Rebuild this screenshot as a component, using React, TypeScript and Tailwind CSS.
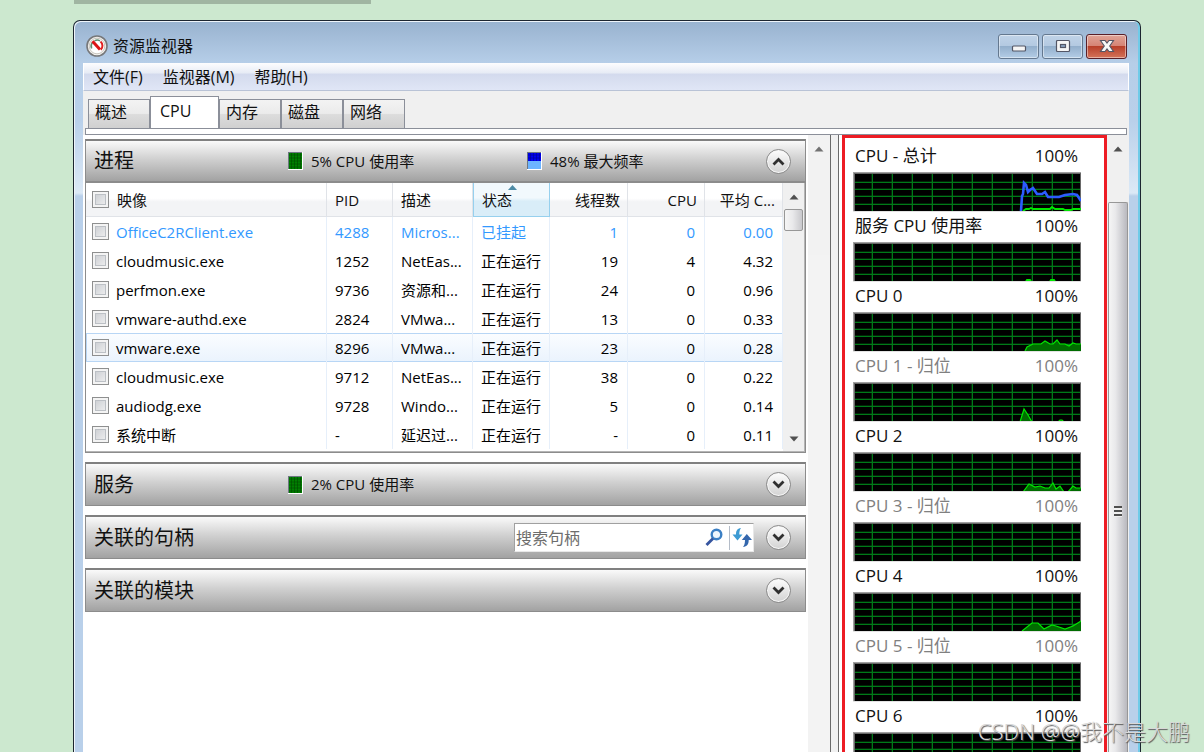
import { useState } from "react";
import type { ReactNode } from "react";

interface Process {
  id: number;
  name: string;
  pid: string;
  desc: string;
  status: string;
  threads: string;
  cpu: string;
  avg: string;
  suspended?: boolean;
  hover?: boolean;
}

const processes: Process[] = [
  { id: 1, name: "OfficeC2RClient.exe", pid: "4288", desc: "Micros...", status: "已挂起", threads: "1", cpu: "0", avg: "0.00", suspended: true },
  { id: 2, name: "cloudmusic.exe", pid: "1252", desc: "NetEas...", status: "正在运行", threads: "19", cpu: "4", avg: "4.32" },
  { id: 3, name: "perfmon.exe", pid: "9736", desc: "资源和...", status: "正在运行", threads: "24", cpu: "0", avg: "0.96" },
  { id: 4, name: "vmware-authd.exe", pid: "2824", desc: "VMwa...", status: "正在运行", threads: "13", cpu: "0", avg: "0.33" },
  { id: 5, name: "vmware.exe", pid: "8296", desc: "VMwa...", status: "正在运行", threads: "23", cpu: "0", avg: "0.28", hover: true },
  { id: 6, name: "cloudmusic.exe", pid: "9712", desc: "NetEas...", status: "正在运行", threads: "38", cpu: "0", avg: "0.22" },
  { id: 7, name: "audiodg.exe", pid: "9728", desc: "Windo...", status: "正在运行", threads: "5", cpu: "0", avg: "0.14" },
  { id: 8, name: "系统中断", pid: "-", desc: "延迟过...", status: "正在运行", threads: "-", cpu: "0", avg: "0.11" },
];

interface Graph {
  name: string;
  parked?: boolean;
  usage?: string;
  fill?: boolean;
  frequency?: string;
}

const graphs: Graph[] = [
  {
    name: "CPU - 总计",
    usage: "170,39 173,37 176,37 178,36 180,37 197,37 199,35 202,37 210,37 212,38 218,38 220,37 228,37",
    frequency: "168,39 169,24 170,22 171,11 173,13 175,20 177,18 180,16 184,22 189,22 192,20 195,25 206,25 212,23 220,22 224,23 228,29",
  },
  { name: "服务 CPU 使用率", usage: "172,41 174,38 177,38 179,41 196,41 198,38 201,38 203,41" },
  {
    name: "CPU 0",
    fill: true,
    usage: "172,39 174,35 180,32 188,32 192,29 197,32 200,32 204,28 207,32 212,32 216,34 220,31 223,32 228,32",
  },
  { name: "CPU 1 - 归位", parked: true, fill: true, usage: "167,40 171,27 175,33 179,40 205,40 207,38 209,38 211,40" },
  {
    name: "CPU 2",
    fill: true,
    usage: "170,40 176,32 182,35 187,34 192,36 196,36 200,31 203,37 207,34 211,40 215,40 220,34 223,36 228,36",
  },
  { name: "CPU 3 - 归位", parked: true },
  { name: "CPU 4", fill: true, usage: "169,39 179,31 185,31 191,37 199,33 203,34 212,37 220,34 228,29" },
  { name: "CPU 5 - 归位", parked: true },
  { name: "CPU 6" },
];

const tabs = ["概述", "CPU", "内存", "磁盘", "网络"];
const menus = ["文件(F)", "监视器(M)", "帮助(H)"];

function AppIcon() {
  return (
    <svg className="size-[22px]" viewBox="0 0 22 22" aria-hidden="true">
      <circle cx="11" cy="11" r="10" fill="#f4f2ee" stroke="#77787a" strokeWidth="1.6" />
      <circle cx="11" cy="11" r="7.8" fill="#fff" stroke="#c9c6bf" />
      <path d="M5.600 13.500A5.600 5.600 0 0 1 6.500 7.500M8.500 5.800a5.600 5.600 0 0 1 5.500 0" fill="none" stroke="#5f8f72" strokeWidth="1.5" />
      <path d="M14.500 6.500c2.500 2.300 2.600 6 .3 8.200" fill="none" stroke="#e02020" strokeWidth="2" />
      <path d="M6.500 6.200l7.500 8.300" stroke="#dd1515" strokeWidth="3" />
    </svg>
  );
}

function Arrow({ down = false }: { down?: boolean }) {
  return (
    <svg className="w-[10px] h-[6px]" viewBox="0 0 10 6" aria-hidden="true">
      <path d={down ? "M0.500 0.500h9L5 5.500z" : "M0.500 5.500h9L5 0.500z"} fill="#505050" />
    </svg>
  );
}

function CaptionButtons() {
  const base =
    "w-[41px] h-[25px] flex items-center justify-center rounded-[3px] border shadow-[inset_0_0_0_1px_rgba(255,255,255,0.45)]";
  const glass = "border-[#64788f] bg-[linear-gradient(#c0d3e8_0%,#b3c9e1_48%,#93afcc_50%,#b4cde6_100%)]";
  return (
    <div className="flex gap-[3px]">
      <button className={`${base} ${glass}`} aria-label="最小化">
        <svg width="16" height="14" viewBox="0 0 16 14">
          <rect x="1.5" y="7" width="13" height="5" rx="1" fill="#f5f5f5" stroke="#535666" strokeWidth="1.2" />
        </svg>
      </button>
      <button className={`${base} ${glass}`} aria-label="最大化">
        <svg width="16" height="14" viewBox="0 0 16 14">
          <rect x="1.500" y="1.500" width="13" height="11" rx="1" fill="#f5f5f5" stroke="#535666" strokeWidth="1.2" />
          <rect x="5.500" y="5.500" width="5" height="3" fill="#8aa3c0" stroke="#535666" strokeWidth="1.2" />
        </svg>
      </button>
      <button
        className={`${base} border-[#5a1f28] bg-[linear-gradient(#e0a497_0%,#d58374_48%,#b8402a_50%,#d4735a_100%)]`}
        aria-label="关闭"
      >
        <svg width="16" height="14" viewBox="0 0 16 14">
          <path
            d="M1.500 1.500h4.500L8 4l2-2.500h4.500L10.700 7l3.800 5.500H10L8 10l-2 2.500H1.500L5.300 7z"
            fill="#f8f8f8"
            stroke="#535666"
            strokeWidth="1.1"
          />
        </svg>
      </button>
    </div>
  );
}

function Meter({ kind, text }: { kind: "usage" | "frequency"; text: string }) {
  return (
    <div className="w-[243px] flex items-center gap-2 text-[15px]">
      <svg className="w-[15px] h-[18px]" viewBox="0 0 15 18" aria-hidden="true">
        <rect width="15" height="18" fill="#fff" />
        <rect width="14" height="17" fill="#6d7680" />
        {kind === "usage" ? (
          <rect x="1" y="1" width="13" height="16" fill="#008000" />
        ) : (
          <>
            <rect x="1" y="1" width="13" height="8" fill="#0000f0" />
            <rect x="1" y="9" width="13" height="8" fill="#6cb4ff" />
          </>
        )}
        <path
          d={
            kind === "usage"
              ? "M1 3h13M1 6h13M1 9h13M1 12h13M1 15h13M3.500 1v16M6.500 1v16M9.500 1v16M12.500 1v16"
              : "M1 3h13M1 6h13M3.500 1v8M6.500 1v8M9.500 1v8M12.500 1v8"
          }
          stroke={kind === "usage" ? "#004a00" : "#000090"}
          strokeWidth="0.6"
        />
      </svg>
      <span>{text}</span>
    </div>
  );
}

interface PanelProps {
  title: string;
  open?: boolean;
  meters?: ReactNode;
  tools?: ReactNode;
  children?: ReactNode;
}

function Panel({ title, open = false, meters, tools, children }: Readonly<PanelProps>) {
  return (
    <section className="border border-[#8c8c8c] border-t-2 border-t-[#808080] bg-white shadow-[inset_-1px_-1px_0_#b5b5b5]">
      <header
        className={`flex items-center pl-2 pr-[14px] bg-[linear-gradient(#fafafa,#d0d0d0_45%,#a2a2a2)] ${
          open ? "h-[42px] border-b-2 border-[#8c8c8c]" : "h-[41px]"
        }`}
      >
        <h2 className="w-[194px] shrink-0 text-xl leading-6">{title}</h2>
        {meters}
        <div className="ml-auto flex items-center gap-3">
          {tools}
          <button
            className="size-[25px] flex items-center justify-center rounded-full border border-[#8a8a8a] bg-[linear-gradient(#fdfdfd,#d2d2d2)] shadow-[inset_0_0_0_1px_#f6f6f6]"
            aria-label={title}
            aria-expanded={open}
          >
            <svg width="13" height="9" viewBox="0 0 13 9">
              <path d={open ? "M1.500 7.500l5-5 5 5" : "M1.500 1.500l5 5 5-5"} fill="none" stroke="#303030" strokeWidth="2.800" />
            </svg>
          </button>
        </div>
      </header>
      {children}
    </section>
  );
}

function HandleSearch() {
  return (
    <div className="w-[240px] h-[29px] flex items-center bg-white border border-[#e8e8e8] border-t-[#a0a0a0] border-l-[#a0a0a0]">
      <input
        type="text"
        aria-label="搜索句柄"
        placeholder="搜索句柄"
        className="flex-1 min-w-0 pl-px text-base placeholder:text-[#6d6d6d] outline-none"
      />
      <button aria-label="搜索" className="px-[5px]">
        <svg width="19" height="19" viewBox="0 0 19 19">
          <circle cx="11.500" cy="6.500" r="4.800" fill="#eef6fd" stroke="#3b7fc4" strokeWidth="2.400" />
          <path d="M8 10.500L1.500 17" stroke="#35549f" strokeWidth="2.800" />
        </svg>
      </button>
      <button aria-label="刷新" className="h-6 pl-[2px] border-l border-[#b4bcc8]">
        <svg width="21" height="20" viewBox="0 0 21 20">
          <path d="M9 0C5 0.500 4 3 4 6.500H0.500L5.500 12.500l5-6H7.300c0-3 .5-5 1.700-6.500z" fill="#3d9bd3" />
          <path d="M11 19c4-.5 5.700-2.500 5.700-7H20L14.800 6 9.800 12H13c0 3.500-.7 5.500-2 7z" fill="#3467ad" />
        </svg>
      </button>
    </div>
  );
}

function Checkbox({ label }: { label: string }) {
  return (
    <input
      type="checkbox"
      aria-label={label}
      className="size-[17px] shrink-0 appearance-none border border-[#8e8f8f] bg-[linear-gradient(135deg,#c6c9ce,#f4f4f4)] shadow-[inset_0_0_0_2px_#f4f4f4,inset_0_0_0_3px_#bcc0c5]"
    />
  );
}

function ProcessTable() {
  const th = "relative border-r border-[#e0e3e8] border-b font-normal";
  const td = "border-r border-[#e6effa]";
  return (
    <div className="flex mr-px mb-px">
      <table className="flex-1 w-full mb-[2px] table-fixed border-separate border-spacing-0 text-[15px] leading-5 whitespace-nowrap">
        <colgroup>
          <col />
          <col className="w-[66px]" />
          <col className="w-[80px]" />
          <col className="w-[77px]" />
          <col className="w-[78px]" />
          <col className="w-[77px]" />
          <col className="w-[78px]" />
        </colgroup>
        <thead>
          <tr className="h-[34px] text-left bg-[linear-gradient(#fff_45%,#f3f4f6_55%)]">
            <th className={`${th} pl-[6px]`}>
              <div className="flex items-center gap-2">
                <Checkbox label="全选" />
                映像
              </div>
            </th>
            <th className={`${th} pl-2`}>PID</th>
            <th className={`${th} pl-2`}>描述</th>
            <th className="relative pl-2 font-normal border border-t-0 border-[#96d0ee] bg-[linear-gradient(#f2f9fd_45%,#d9edf8_55%)]">
              <svg className="absolute left-[34px] top-[2px]" width="9" height="5" viewBox="0 0 9 5" aria-hidden="true">
                <path d="M0 5h9L4.500 0z" fill="#4d8ba6" />
              </svg>
              状态
            </th>
            <th className={`${th} pr-[7px] text-right`}>线程数</th>
            <th className={`${th} pr-[7px] text-right`}>CPU</th>
            <th className={`${th} pr-[7px] text-right`}>平均 C...</th>
          </tr>
        </thead>
        <tbody>
          {processes.map((p) => (
            <tr
              key={p.id}
              className={`h-[29px] ${p.suspended ? "text-[#3399ff]" : "text-black"} ${
                p.hover ? "bg-[linear-gradient(#fbfdff,#eaf3fd)] shadow-[inset_0_0_0_1px_#b8d6f5]" : ""
              }`}
            >
              <td className={`${td} pl-[6px]`}>
                <label className="flex items-center gap-[7px]">
                  <Checkbox label={p.name} />
                  {p.name}
                </label>
              </td>
              <td className={`${td} pl-2`}>{p.pid}</td>
              <td className={`${td} pl-2`}>{p.desc}</td>
              <td className={`${td} pl-2`}>{p.status}</td>
              <td className={`${td} pr-[9px] text-right`}>{p.threads}</td>
              <td className={`${td} pr-[9px] text-right`}>{p.cpu}</td>
              <td className={`${td} pr-[9px] text-right`}>{p.avg}</td>
            </tr>
          ))}
        </tbody>
      </table>
      <div className="w-[21px] flex flex-col items-center pt-[11px] pb-[9px] bg-[#f0f0f0]">
        <Arrow />
        <div className="mt-[9px] w-[19px] h-[22px] rounded-[2px] border border-[#979797] bg-[linear-gradient(90deg,#f5f5f5,#e9e9eb_45%,#c8c8cc)]" />
        <div className="mt-auto flex">
          <Arrow down />
        </div>
      </div>
    </div>
  );
}

function UsageGraph({ graph }: { graph: Graph }) {
  const columns = Array.from({ length: 11 }, (_, i) => 19 + i * 20);
  return (
    <li className="h-[70px]">
      <div className={`h-8 flex items-center justify-between px-[2px] pr-[3px] text-[17px] ${graph.parked ? "text-[#808080]" : "text-[#111111]"}`}>
        <span>{graph.name}</span>
        <span>100%</span>
      </div>
      <svg className="block w-full h-[40px]" viewBox="0 0 228 40" preserveAspectRatio="none" aria-hidden="true">
        <rect width="228" height="40" fill="#e3e3e3" />
        <rect width="228" height="39" fill="#a0a0a0" />
        <rect x="1" y="1" width="227" height="38" fill="#696969" />
        <rect x="2" y="2" width="225" height="37" fill="#000" />
        {columns.map((x) => (
          <rect key={x} x={x - 0.3} y="2" width="1.300" height="37" fill="#007a18" />
        ))}
        {[10, 17, 24, 32].map((y) => (
          <rect key={y} x="2" y={y - 0.3} width="225" height="1.300" fill="#007a18" />
        ))}
        {graph.fill && graph.usage && <polygon points={`${graph.usage} 228,40`} fill="#006c00" />}
        {graph.frequency && <polyline points={graph.frequency} fill="none" stroke="#2c5cff" strokeWidth="2.600" />}
        {graph.usage && <polyline points={graph.usage} fill="none" stroke="#00e600" strokeWidth={graph.fill ? "1.200" : "1.800"} />}
        <rect y="39" width="228" height="1" fill="#e3e3e3" />
      </svg>
    </li>
  );
}

export default function App() {
  const [activeTab, setActiveTab] = useState("CPU");

  return (
    <div className="relative h-screen flex flex-col overflow-hidden bg-[#cce8cf] text-[#111111] font-['Open_Sans','Noto_Sans_CJK_SC',sans-serif]">
      <div className="ml-[74px] w-[297px] h-1 shrink-0 bg-[#a0b5a2]" />

      <div className="mt-4 ml-[73px] mr-[63px] flex-1 min-h-0 flex flex-col rounded-t-[7px] border border-b-0 border-[#1c2530] pl-[9px] pr-[11px] bg-[linear-gradient(#98b2cf_0px,#b6cee8_42px,#b9d0ea_100px,#dce9f6_172px,#b9d0ea_175px)] shadow-[inset_1px_1px_0_#eef4fa,inset_-2px_0_0_#6fcbe8]">
        {/* Title bar */}
        <div className="h-[42px] shrink-0 flex items-center pt-2 pl-[3px] pr-[2px]">
          <AppIcon />
          <h1 className="ml-[5px] text-base">资源监视器</h1>
          <div className="ml-auto">
            <CaptionButtons />
          </div>
        </div>

        {/* Menu bar */}
        <nav className="h-7 shrink-0 flex items-center gap-5 pl-[9px] text-base border-x border-b border-[#b9c3d6] border-x-white bg-[linear-gradient(#fdfdfe,#e6ebf5_38%,#d3daed_40%,#e0e6f6)]">
          {menus.map((menu) => (
            <button key={menu}>{menu}</button>
          ))}
        </nav>

        <main className="flex-1 min-h-0 flex flex-col bg-white">
          {/* Tabs */}
          <div className="h-[37px] shrink-0 flex items-end pl-[5px] bg-[#f0f0f0]" role="tablist">
            {tabs.map((tab) => (
              <button
                key={tab}
                role="tab"
                aria-selected={activeTab === tab}
                onClick={() => setActiveTab(tab)}
                className={`border border-b-0 border-[#8b8f99] text-left text-base pb-1 ${
                  activeTab === tab
                    ? "w-[69px] h-8 px-[9px] bg-white"
                    : "w-[62px] h-[29px] px-[6px] bg-[linear-gradient(#f3f3f3,#ebebeb_48%,#dcdcdc_52%,#d0d0d0)]"
                }`}
              >
                {tab}
              </button>
            ))}
          </div>
          <div className="bg-[#f0f0f0] px-[2px] shrink-0">
            <div className="h-[7px] border border-[#8b8f99] bg-white" />
          </div>

          <div className="flex-1 min-h-0 flex overflow-hidden">
            <div className="flex-1 min-w-0 pt-1 pl-[2px] pr-[2px] flex flex-col gap-[9px]">
              <Panel
                title="进程"
                open
                meters={
                  <>
                    <Meter kind="usage" text="5% CPU 使用率" />
                    <Meter kind="frequency" text="48% 最大频率" />
                  </>
                }
              >
                <ProcessTable />
              </Panel>
              <Panel title="服务" meters={<Meter kind="usage" text="2% CPU 使用率" />} />
              <Panel title="关联的句柄" tools={<HandleSearch />} />
              <Panel title="关联的模块" />
            </div>

            <div className="w-[22px] flex justify-center pt-[11px] bg-[#f0f0f0] opacity-80">
              <Arrow />
            </div>
            <div className="w-[9px] mr-[3px] border-x border-[#696969] bg-[#f0f0f0]" />

            {/* Graphs */}
            <aside className="w-[265px] shrink-0 border-[3px] border-b-0 border-[#ed1c24] pt-[2px] overflow-hidden">
              <ul className="ml-2 mr-[23px] w-[228px]">
                {graphs.map((graph) => (
                  <UsageGraph key={graph.name} graph={graph} />
                ))}
              </ul>
            </aside>

            <div className="w-[22px] flex flex-col items-center pt-[11px] bg-[#f0f0f0]">
              <Arrow />
              <div className="mt-[50px] w-[20px] flex-1 flex justify-center rounded-t-[2px] border border-b-0 border-[#979797] bg-[linear-gradient(90deg,#f5f5f5,#e9e9eb_35%,#b9b9bf)]">
                <div className="mt-[303px] w-2 h-[11px] bg-[repeating-linear-gradient(#4f4f4f_0px_2px,#f0f0f0_2px_4px)]" />
              </div>
            </div>
          </div>
        </main>
      </div>

      <p className="absolute right-[14px] bottom-[6px] text-[22px] leading-[30px] text-[#d8d8d8] [text-shadow:1px_1px_1px_#555555] font-['Noto_Sans','Noto_Sans_CJK_SC',sans-serif] font-light">
        CSDN @@我不是大鹏
      </p>
    </div>
  );
}
